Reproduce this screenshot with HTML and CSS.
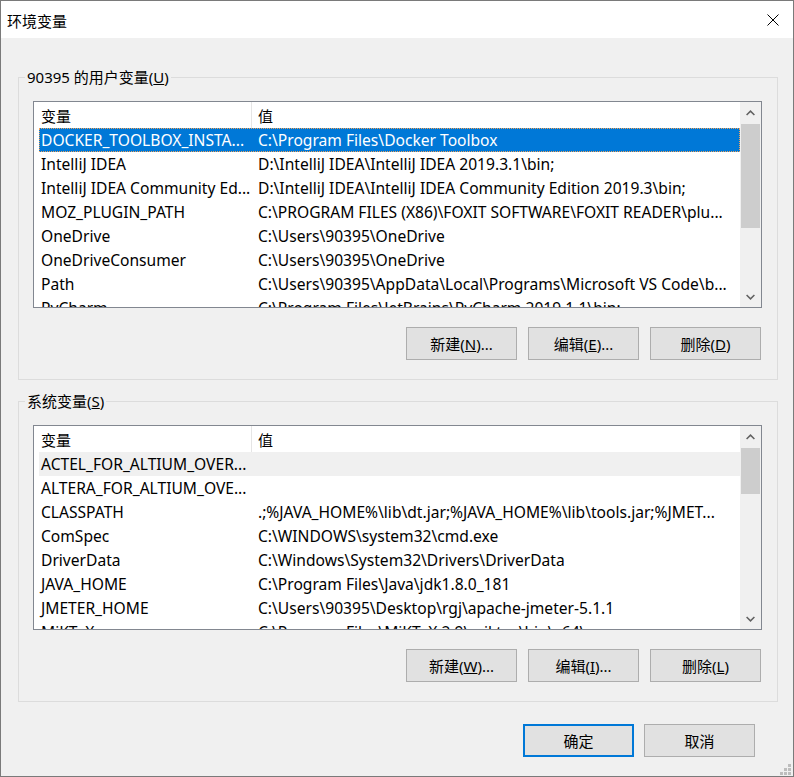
FILE: index.html
```html
<!DOCTYPE html>
<html lang="zh-CN">
<head>
<meta charset="utf-8">
<title>环境变量</title>
<link rel="stylesheet" href="styles.css">
</head>
<body>
<div class="window">
  <div class="titlebar">
    <span class="title">环境变量</span>
    <span class="close"><svg width="12" height="12" viewBox="0 0 12 12"><path d="M0.5 0.5 L11.5 11.5 M11.5 0.5 L0.5 11.5" stroke="#000" stroke-width="1" fill="none"/></svg></span>
  </div>
  <div class="content">
    <fieldset class="group">
      <legend>90395 的用户变量(<u>U</u>)</legend>
      <div class="listview">
        <div class="list-main">
          <div class="header"><div class="hcol hcol-name">变量</div><div class="hcol hcol-value">值</div></div>
          <div class="rows">
            <div class="row selected"><span class="c1">DOCKER_TOOLBOX_INSTA...</span><span class="c2">C:\Program Files\Docker Toolbox</span></div>
            <div class="row"><span class="c1">IntelliJ IDEA</span><span class="c2">D:\IntelliJ IDEA\IntelliJ IDEA 2019.3.1\bin;</span></div>
            <div class="row"><span class="c1">IntelliJ IDEA Community Ed...</span><span class="c2">D:\IntelliJ IDEA\IntelliJ IDEA Community Edition 2019.3\bin;</span></div>
            <div class="row"><span class="c1">MOZ_PLUGIN_PATH</span><span class="c2">C:\PROGRAM FILES (X86)\FOXIT SOFTWARE\FOXIT READER\plu...</span></div>
            <div class="row"><span class="c1">OneDrive</span><span class="c2">C:\Users\90395\OneDrive</span></div>
            <div class="row"><span class="c1">OneDriveConsumer</span><span class="c2">C:\Users\90395\OneDrive</span></div>
            <div class="row"><span class="c1">Path</span><span class="c2">C:\Users\90395\AppData\Local\Programs\Microsoft VS Code\b...</span></div>
            <div class="row"><span class="c1">PyCharm</span><span class="c2">C:\Program Files\JetBrains\PyCharm 2019.1.1\bin;</span></div>
          </div>
        </div>
        <div class="scrollbar">
          <div class="sb-btn"><svg width="9" height="6" viewBox="0 0 9 6"><path d="M0.6 5 L4.5 1.1 L8.4 5" stroke="#606060" stroke-width="1.5" fill="none"/></svg></div>
          <div class="sb-track"><div class="sb-thumb" style="height:104px"></div></div>
          <div class="sb-btn"><svg width="9" height="6" viewBox="0 0 9 6"><path d="M0.6 1 L4.5 4.9 L8.4 1" stroke="#606060" stroke-width="1.5" fill="none"/></svg></div>
        </div>
      </div>
      <div class="buttons">
        <button class="btn">新建(<u>N</u>)...</button>
        <button class="btn">编辑(<u>E</u>)...</button>
        <button class="btn">删除(<u>D</u>)</button>
      </div>
    </fieldset>

    <fieldset class="group group-system">
      <legend>系统变量(<u>S</u>)</legend>
      <div class="listview listview-short">
        <div class="list-main">
          <div class="header"><div class="hcol hcol-name">变量</div><div class="hcol hcol-value">值</div></div>
          <div class="rows">
            <div class="row inactive"><span class="c1">ACTEL_FOR_ALTIUM_OVER...</span><span class="c2"></span></div>
            <div class="row"><span class="c1">ALTERA_FOR_ALTIUM_OVE...</span><span class="c2"></span></div>
            <div class="row"><span class="c1">CLASSPATH</span><span class="c2">.;%JAVA_HOME%\lib\dt.jar;%JAVA_HOME%\lib\tools.jar;%JMET...</span></div>
            <div class="row"><span class="c1">ComSpec</span><span class="c2">C:\WINDOWS\system32\cmd.exe</span></div>
            <div class="row"><span class="c1">DriverData</span><span class="c2">C:\Windows\System32\Drivers\DriverData</span></div>
            <div class="row"><span class="c1">JAVA_HOME</span><span class="c2">C:\Program Files\Java\jdk1.8.0_181</span></div>
            <div class="row"><span class="c1">JMETER_HOME</span><span class="c2">C:\Users\90395\Desktop\rgj\apache-jmeter-5.1.1</span></div>
            <div class="row"><span class="c1">MiKTeX</span><span class="c2">C:\Program Files\MiKTeX 2.9\miktex\bin\x64\</span></div>
          </div>
        </div>
        <div class="scrollbar">
          <div class="sb-btn"><svg width="9" height="6" viewBox="0 0 9 6"><path d="M0.6 5 L4.5 1.1 L8.4 5" stroke="#606060" stroke-width="1.5" fill="none"/></svg></div>
          <div class="sb-track"><div class="sb-thumb" style="height:46px"></div></div>
          <div class="sb-btn"><svg width="9" height="6" viewBox="0 0 9 6"><path d="M0.6 1 L4.5 4.9 L8.4 1" stroke="#606060" stroke-width="1.5" fill="none"/></svg></div>
        </div>
      </div>
      <div class="buttons">
        <button class="btn">新建(<u>W</u>)...</button>
        <button class="btn">编辑(<u>I</u>)...</button>
        <button class="btn">删除(<u>L</u>)</button>
      </div>
    </fieldset>

    <div class="footer">
      <button class="btn primary">确定</button>
      <button class="btn">取消</button>
    </div>
  </div>
  <div class="grip"><svg width="11" height="11" viewBox="0 0 11 11"><g fill="#bdbdbd"><rect x="8" y="0" width="3" height="3"/><rect x="4" y="4" width="3" height="3"/><rect x="8" y="4" width="3" height="3"/><rect x="0" y="8" width="3" height="3"/><rect x="4" y="8" width="3" height="3"/><rect x="8" y="8" width="3" height="3"/></g></svg></div>
</div>
</body>
</html>
```

FILE: styles.css
```css
html, body {
  margin: 0;
  padding: 0;
  background: #f0f0f0;
}

.window {
  position: relative;
  width: 794px;
  height: 777px;
  box-sizing: border-box;
  border: 1px solid #7a7a7a;
  background: #f0f0f0;
  font-family: "Noto Sans", "Noto Sans CJK SC", sans-serif;
  font-size: 15px;
  color: #000;
  overflow: hidden;
}

.titlebar {
  height: 37px;
  background: #fff;
  display: flex;
  align-items: center;
  justify-content: space-between;
  padding: 0 14px 0 6px;
}

.title {
  font-size: 15px;
  padding-top: 1px;
}

.close {
  display: flex;
  padding-top: 1px;
}

.content {
  display: flex;
  flex-direction: column;
}

.group {
  margin: 29px 15px 0 17px;
  padding: 14px 15px 19px 14px;
  border: 1px solid #dcdcdc;
  min-width: 0;
}

.group-system {
  margin-top: 11px;
}

.group legend {
  margin-left: -8px;
  padding: 0 2px;
  line-height: 20px;
  font-size: 15px;
}

.listview {
  display: flex;
  height: 207px;
  box-sizing: border-box;
  border: 1px solid #828790;
  background: #fff;
}

.listview-short {
  height: 205px;
}

.list-main {
  flex: 1;
  min-width: 0;
  display: flex;
  flex-direction: column;
}

.header {
  flex: none;
  height: 26px;
  display: flex;
}

.hcol {
  box-sizing: border-box;
  padding-top: 3px;
  line-height: 22px;
  height: 26px;
}

.hcol-name {
  width: 218px;
  padding-left: 7px;
  border-right: 1px solid #e5e5e5;
}

.hcol-value {
  padding-left: 6px;
}

.rows {
  flex: 1;
  overflow: hidden;
}

.row {
  height: 24px;
  margin-left: 5px;
  display: flex;
  align-items: center;
  white-space: nowrap;
  box-sizing: border-box;
  line-height: 24px;
  font-size: 15.6px;
}

.c1 {
  flex: none;
  width: 217px;
  padding-left: 2px;
  box-sizing: border-box;
  overflow: hidden;
}

.c2 {
  padding-left: 2px;
}

.row.selected {
  background: #0078d7;
  color: #fff;
  outline: 1px dotted #f0a35a;
  outline-offset: -1px;
}

.row.inactive {
  background: #f0f0f0;
}

.scrollbar {
  flex: none;
  width: 21px;
  background: #f0f0f0;
  display: flex;
  flex-direction: column;
}

.sb-btn {
  flex: none;
  height: 21px;
  display: flex;
  align-items: center;
  justify-content: center;
}

.sb-track {
  flex: 1;
  padding: 1px 1px 0 1px;
}

.sb-thumb {
  background: #cdcdcd;
}

.buttons {
  display: flex;
  justify-content: flex-end;
  gap: 11px;
  margin-top: 19px;
  padding-right: 1px;
}

.btn {
  width: 111px;
  height: 33px;
  box-sizing: border-box;
  padding: 0;
  margin: 0;
  background: #e1e1e1;
  border: 1px solid #adadad;
  font-family: inherit;
  font-size: 15px;
  color: #000;
}

.btn.primary {
  border: 2px solid #0078d7;
}

.footer {
  display: flex;
  justify-content: flex-end;
  gap: 10px;
  margin: 22px 38px 0 0;
}

.grip {
  position: absolute;
  right: 2px;
  bottom: 1px;
  display: flex;
}
```
